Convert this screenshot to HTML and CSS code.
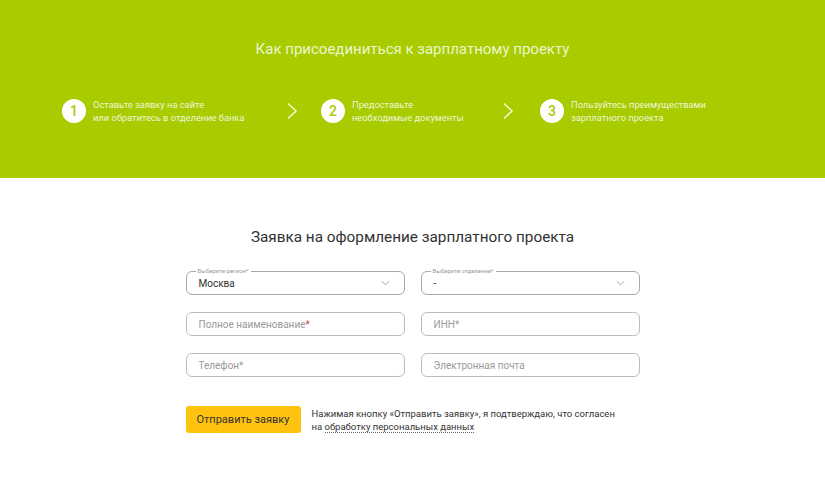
FILE: index.html
```html
<!DOCTYPE html>
<html lang="ru">
<head>
<meta charset="utf-8">
<link rel="stylesheet" href="styles.css">
</head>
<body>
<section class="hero">
  <h2 class="hero-title">Как присоединиться к зарплатному проекту</h2>
  <div class="steps">
    <div class="step step-1"><span class="num">1</span><span class="step-text">Оставьте заявку на сайте<br>или обратитесь в отделение банка</span></div>
    <svg class="arrow arrow-1" viewBox="0 0 12 18" width="12" height="18"><path d="M2 1.5 L10 9 L2 16.5" fill="none" stroke="#f2f9c8" stroke-width="1.6"/></svg>
    <div class="step step-2"><span class="num">2</span><span class="step-text">Предоставьте<br>необходимые документы</span></div>
    <svg class="arrow arrow-2" viewBox="0 0 12 18" width="12" height="18"><path d="M2 1.5 L10 9 L2 16.5" fill="none" stroke="#f2f9c8" stroke-width="1.6"/></svg>
    <div class="step step-3"><span class="num">3</span><span class="step-text">Пользуйтесь преимуществами<br>зарплатного проекта</span></div>
  </div>
</section>
<section class="form-section">
  <h2 class="form-title">Заявка на оформление зарплатного проекта</h2>
  <div class="grid">
    <div class="field select"><span class="legend">Выберите регион*</span><span class="value">Москва</span><svg class="chev" viewBox="0 0 10 6" width="9" height="6"><path d="M1 1 L5 5 L9 1" fill="none" stroke="#9a9a9a" stroke-width="1"/></svg></div>
    <div class="field select"><span class="legend">Выберите отделение*</span><span class="value">-</span><svg class="chev" viewBox="0 0 10 6" width="9" height="6"><path d="M1 1 L5 5 L9 1" fill="none" stroke="#9a9a9a" stroke-width="1"/></svg></div>
    <div class="field"><span class="ph">Полное наименование<span class="req">*</span></span></div>
    <div class="field"><span class="ph">ИНН*</span></div>
    <div class="field"><span class="ph">Телефон*</span></div>
    <div class="field"><span class="ph">Электронная почта</span></div>
  </div>
  <div class="submit-row">
    <button class="btn">Отправить заявку</button>
    <p class="agree">Нажимая кнопку «Отправить заявку», я подтверждаю, что согласен<br>на <span class="link">обработку персональных данных</span></p>
  </div>
</section>
</body>
</html>
```
FILE: styles.css
```css
* { box-sizing: border-box; }
html, body { margin: 0; padding: 0; }
body {
  font-family: "Roboto", "Open Sans", sans-serif;
  background: #fff;
  color: #333;
  width: 825px;
}
.hero {
  background: #a8cc00;
  height: 178px;
  padding-top: 39px;
}
.hero-title {
  margin: 0;
  text-align: center;
  font-weight: 400;
  font-size: 15px;
  line-height: 20px;
  color: rgba(255,255,255,0.82);
}
.steps {
  display: flex;
  align-items: center;
  padding-left: 62px;
  margin-top: 39px;
}
.step {
  display: flex;
  align-items: center;
}
.step-1 { width: 224px; }
.step-2 { width: 181px; }
.arrow-1 { margin-right: 23px; }
.arrow-2 { margin-right: 26px; }
.num {
  width: 24px;
  height: 24px;
  border-radius: 50%;
  background: #fff;
  color: #a8cc00;
  font-size: 14px;
  font-weight: 500;
  display: flex;
  align-items: center;
  justify-content: center;
  flex: none;
  margin-right: 7px;
}
.step-text {
  font-size: 9.3px;
  line-height: 13px;
  color: rgba(255,255,255,0.85);
}
.form-section {
  padding-top: 49px;
}
.form-title {
  margin: 0;
  text-align: center;
  font-weight: 400;
  font-size: 15.3px;
  line-height: 20px;
  color: #333;
}
.grid {
  width: 454px;
  margin: 24px auto 0;
  display: grid;
  grid-template-columns: 219px 219px;
  column-gap: 16px;
  row-gap: 17px;
}
.field {
  position: relative;
  height: 24px;
  border: 1px solid #bdbdbd;
  border-radius: 6px;
  display: flex;
  align-items: center;
  padding: 0 12px;
  font-size: 10px;
}
.field.select { border-color: #a9a9a9; }
.legend {
  position: absolute;
  left: 9px;
  top: -5px;
  font-size: 6px;
  line-height: 8px;
  padding: 0 2px;
  background: #fff;
  color: #999;
}
.value { color: #333; flex: 1; }
.chev { flex: none; margin-right: 2px; }
.ph { color: #9a9a9a; }
.req { color: #d04040; }
.submit-row {
  width: 454px;
  margin: 29px auto 0;
  display: flex;
  align-items: center;
}
.btn {
  width: 115px;
  height: 27px;
  border: 0;
  border-radius: 3px;
  background: #ffc20e;
  color: #333;
  font-family: inherit;
  font-size: 11px;
  padding: 0;
  margin-right: 11px;
}
.agree {
  margin: 0;
  font-size: 9.5px;
  line-height: 13px;
  color: #333;
}
.link {
  border-bottom: 1px dotted #666;
}
```
